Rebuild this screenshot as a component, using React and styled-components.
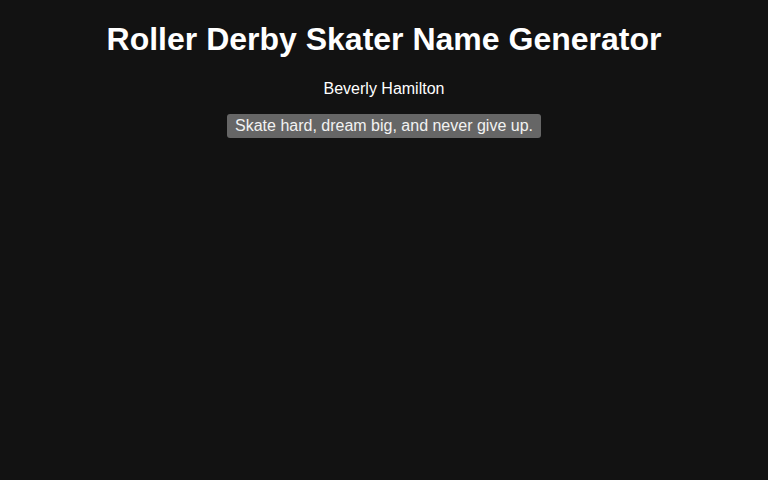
import React from 'react'
import styled, { createGlobalStyle } from 'styled-components'

const GlobalStyle = createGlobalStyle `

    html, body {
        margin: 0;
        background-color: #121212;
        height: 100%;
    }

    body {
        font-family: "Liberation Sans", Arial, sans-serif;
        color: #ffffff;
    }

`

const Container = styled.div `

    display: flex;
    flex-direction: column;
    align-items: center;
    text-align: center;

`

const Title = styled.h1 `

    font-size: 32px;
    font-weight: bold;
    margin: 21.44px 0;
    color: #ffffff;

`

const Name = styled.p `

    font-size: 16px;
    margin: 0 0 16px;
    color: #ffffff;

`

const Quote = styled.div `

    display: inline-block;
    margin: 0 0 16px;
    padding: 3px 8px;
    background-color: #666666;
    border-radius: 3px;
    font-size: 16px;
    color: #f2f2f2;

`

const App = () => {

  return (
    <Container>
        <GlobalStyle />
        <Title>Roller Derby Skater Name Generator</Title>
        <Name>Beverly Hamilton</Name>
        <Quote>Skate hard, dream big, and never give up.</Quote>
    </Container>
  )

}

export default App
